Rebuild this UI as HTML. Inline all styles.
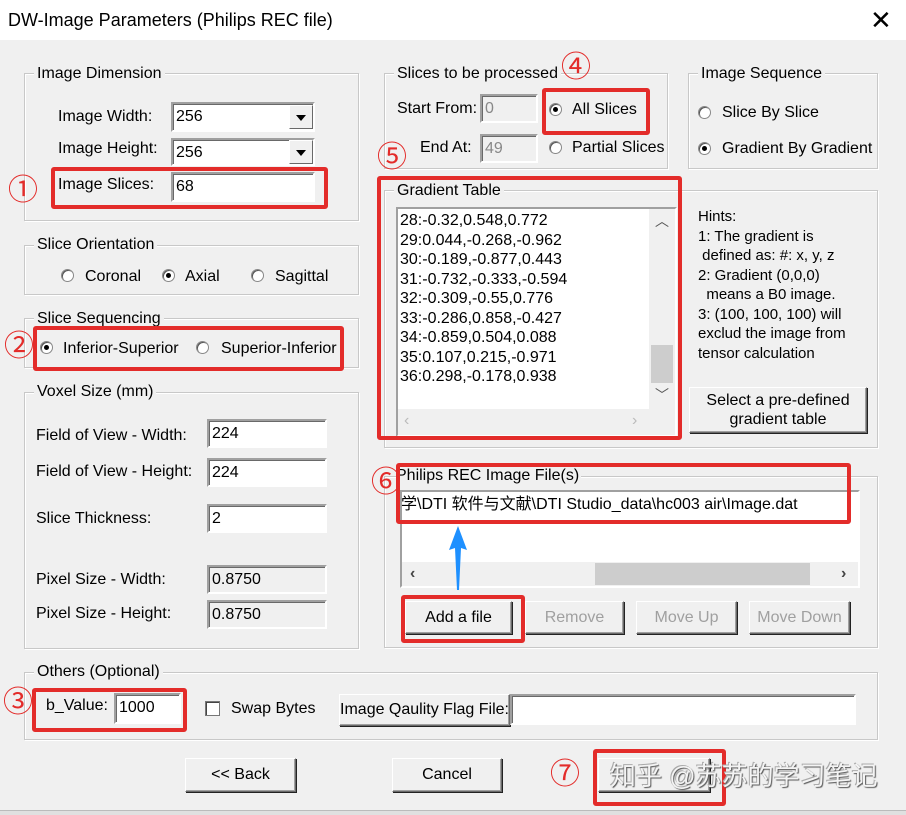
<!DOCTYPE html>
<html><head><meta charset="utf-8">
<style>
*{margin:0;padding:0;box-sizing:border-box}
body{width:906px;height:815px;background:#f0f0f0;font-family:"Liberation Sans","Noto Sans CJK SC",sans-serif;font-size:16px;color:#000;position:relative;overflow:hidden}
.a{position:absolute;white-space:nowrap;line-height:18px}
.g{position:absolute;border:1px solid #c8c8c8;box-shadow:inset 1px 1px 0 #fff,1px 1px 0 #fff}
.gl{position:absolute;background:#f0f0f0;padding:0 3px;line-height:18px;white-space:nowrap}
.in{position:absolute;background:#fff;border:2px solid;border-color:#a0a0a0 #fff #fff #a0a0a0;box-shadow:inset 1px 1px 0 #696969;padding:0 3px;line-height:26px}
.in.d{background:#f0f0f0;color:#888}
.in.d2{background:#f0f0f0}
.btn{position:absolute;border:1px solid;border-color:#fff #696969 #696969 #fff;box-shadow:inset -1px -1px 0 #a0a0a0,1px 1px 0 #222;background:#f0f0f0;text-align:center;line-height:1.2;display:flex;align-items:center;justify-content:center}
.btn.dis{color:#a0a0a0}
.red{position:absolute;border:4px solid #e32c2a;border-radius:3px}
.num{position:absolute;color:#e32c2a;font-size:30px;line-height:30px}
.rad{position:absolute;width:13px;height:13px;border-radius:50%;background:#fff;border:1px solid #888;box-shadow:inset 1px 1px 0 #555}
.rad.on::after{content:"";position:absolute;left:3px;top:3px;width:5px;height:5px;border-radius:50%;background:#000}
.dd{position:absolute;width:24px;height:24px;background:#f0f0f0;border:1px solid;border-color:#fff #696969 #696969 #fff}
.dd::after{content:"";position:absolute;left:6px;top:9px;border:5px solid transparent;border-top:6px solid #000}
</style></head><body>
<div style="position:absolute;left:0;top:0;width:906px;height:40px;background:#fff"></div>
<div class="a" style="left:8px;top:10px;font-size:18px;line-height:20px">DW-Image Parameters (Philips REC file)</div>
<div class="a" style="left:870px;top:6px;font-size:26px;line-height:28px;font-weight:300">✕</div>

<div class="g" style="left:24px;top:73px;width:335px;height:148px"></div>
<div class="gl" style="left:34px;top:65px">Image Dimension</div>
<div class="a" style="left:58px;top:108px">Image Width:</div>
<div class="in" style="left:171px;top:102px;width:144px;height:30px">256</div><div class="dd" style="left:289px;top:105px"></div>
<div class="a" style="left:58px;top:140px">Image Height:</div>
<div class="in" style="left:171px;top:138px;width:144px;height:28px">256</div><div class="dd" style="left:289px;top:140px"></div>
<div class="a" style="left:58px;top:176px">Image Slices:</div>
<div class="in" style="left:171px;top:172px;width:144px;height:30px">68</div>
<div class="red" style="left:51px;top:167px;width:277px;height:42px"></div>
<div class="num" style="left:8px;top:176px">①</div>

<div class="g" style="left:24px;top:245px;width:335px;height:50px"></div>
<div class="gl" style="left:34px;top:236px">Slice Orientation</div>
<div class="rad" style="left:61px;top:269px"></div><div class="a" style="left:85px;top:268px">Coronal</div>
<div class="rad on" style="left:162px;top:269px"></div><div class="a" style="left:185px;top:268px">Axial</div>
<div class="rad" style="left:251px;top:269px"></div><div class="a" style="left:275px;top:268px">Sagittal</div>

<div class="g" style="left:24px;top:318px;width:335px;height:50px"></div>
<div class="gl" style="left:34px;top:310px">Slice Sequencing</div>
<div class="rad on" style="left:40px;top:341px"></div><div class="a" style="left:63px;top:340px">Inferior-Superior</div>
<div class="rad" style="left:196px;top:341px"></div><div class="a" style="left:221px;top:340px">Superior-Inferior</div>
<div class="red" style="left:33px;top:326px;width:311px;height:45px"></div>
<div class="num" style="left:4px;top:332px">②</div>

<div class="g" style="left:24px;top:392px;width:335px;height:257px"></div>
<div class="gl" style="left:34px;top:383px">Voxel Size (mm)</div>
<div class="a" style="left:36px;top:427px">Field of View - Width:</div>
<div class="in" style="left:207px;top:419px;width:120px;height:29px">224</div>
<div class="a" style="left:36px;top:463px">Field of View - Height:</div>
<div class="in" style="left:207px;top:458px;width:120px;height:29px">224</div>
<div class="a" style="left:36px;top:510px">Slice Thickness:</div>
<div class="in" style="left:207px;top:504px;width:120px;height:29px">2</div>
<div class="a" style="left:36px;top:571px">Pixel Size - Width:</div>
<div class="in d2" style="left:207px;top:565px;width:120px;height:29px">0.8750</div>
<div class="a" style="left:36px;top:605px">Pixel Size - Height:</div>
<div class="in d2" style="left:207px;top:600px;width:120px;height:29px">0.8750</div>

<div class="g" style="left:384px;top:73px;width:284px;height:96px"></div>
<div class="gl" style="left:394px;top:65px">Slices to be processed</div>
<div class="num" style="left:561px;top:53px">④</div>
<div class="a" style="left:397px;top:100px">Start From:</div>
<div class="in d" style="left:480px;top:94px;width:58px;height:29px">0</div>
<div class="a" style="left:420px;top:139px">End At:</div>
<div class="in d" style="left:480px;top:134px;width:58px;height:29px">49</div>
<div class="rad on" style="left:549px;top:103px"></div><div class="a" style="left:572px;top:101px">All Slices</div>
<div class="rad" style="left:549px;top:141px"></div><div class="a" style="left:572px;top:139px">Partial Slices</div>
<div class="red" style="left:542px;top:88px;width:108px;height:47px"></div>

<div class="g" style="left:688px;top:73px;width:190px;height:96px"></div>
<div class="gl" style="left:698px;top:65px">Image Sequence</div>
<div class="rad" style="left:698px;top:106px"></div><div class="a" style="left:722px;top:104px">Slice By Slice</div>
<div class="rad on" style="left:698px;top:142px"></div><div class="a" style="left:722px;top:140px">Gradient By Gradient</div>

<div class="num" style="left:377px;top:143px">⑤</div>
<div class="g" style="left:384px;top:190px;width:494px;height:258px"></div>
<div class="gl" style="left:394px;top:182px">Gradient Table</div>
<div style="position:absolute;left:396px;top:207px;width:281px;height:230px;background:#fff;border:2px solid;border-color:#a0a0a0 #fff #fff #a0a0a0"></div>
<div style="position:absolute;left:649px;top:209px;width:26px;height:200px;background:#f0f0f0"></div>
<div style="position:absolute;left:651px;top:345px;width:22px;height:38px;background:#cdcdcd"></div>
<div class="a" style="left:655px;top:212px;color:#555;font-size:14px">︿</div>
<div class="a" style="left:655px;top:386px;color:#555;font-size:14px">﹀</div>
<div style="position:absolute;left:398px;top:409px;width:277px;height:26px;background:#f0f0f0"></div>
<div class="a" style="left:404px;top:412px;color:#bbb">‹</div>
<div class="a" style="left:632px;top:412px;color:#bbb">›</div>
<div class="a" style="left:400px;top:211px;line-height:19.5px">28:-0.32,0.548,0.772<br>29:0.044,-0.268,-0.962<br>30:-0.189,-0.877,0.443<br>31:-0.732,-0.333,-0.594<br>32:-0.309,-0.55,0.776<br>33:-0.286,0.858,-0.427<br>34:-0.859,0.504,0.088<br>35:0.107,0.215,-0.971<br>36:0.298,-0.178,0.938</div>
<div class="red" style="left:377px;top:176px;width:305px;height:264px"></div>
<div class="a" style="left:698px;top:207px;line-height:19.5px;font-size:15px">Hints:<br>1: The gradient is<br>&nbsp;defined as: #: x, y, z<br>2: Gradient (0,0,0)<br>&nbsp;&nbsp;means a B0 image.<br>3: (100, 100, 100) will<br>exclud the image from<br>tensor calculation</div>
<div class="btn" style="left:689px;top:387px;width:178px;height:46px">Select a pre-defined<br>gradient table</div>

<div class="g" style="left:384px;top:476px;width:494px;height:172px"></div>
<div class="gl" style="left:396px;top:467px;padding:0 2px 0 0">Philips REC Image File(s)</div>
<div style="position:absolute;left:400px;top:490px;width:460px;height:98px;background:#fff;border:2px solid;border-color:#a0a0a0 #fff #fff #a0a0a0"></div>
<div style="position:absolute;left:402px;top:562px;width:456px;height:24px;background:#f0f0f0"></div>
<div style="position:absolute;left:595px;top:563px;width:215px;height:22px;background:#cdcdcd"></div>
<div class="a" style="left:410px;top:565px;color:#444;font-weight:bold">‹</div>
<div class="a" style="left:841px;top:565px;color:#444;font-weight:bold">›</div>
<div class="a" style="left:401px;top:496px">学\DTI 软件与文献\DTI Studio_data\hc003 air\Image.dat</div>
<div class="red" style="left:396px;top:463px;width:455px;height:61px"></div>
<div class="num" style="left:371px;top:468px">⑥</div>
<svg style="position:absolute;left:447px;top:524px" width="22" height="68"><path d="M11 2 L2 26 L8 24 L10 66 L12 66 L14 24 L20 26 Z" fill="#1e90ff"/></svg>
<div class="btn" style="left:405px;top:601px;width:107px;height:33px">Add a file</div>
<div class="red" style="left:401px;top:595px;width:124px;height:48px"></div>
<div class="btn dis" style="left:525px;top:601px;width:99px;height:33px">Remove</div>
<div class="btn dis" style="left:636px;top:601px;width:101px;height:33px">Move Up</div>
<div class="btn dis" style="left:749px;top:601px;width:101px;height:33px">Move Down</div>

<div class="g" style="left:24px;top:672px;width:854px;height:68px"></div>
<div class="gl" style="left:34px;top:663px">Others (Optional)</div>
<div class="a" style="left:46px;top:697px">b_Value:</div>
<div class="in" style="left:114px;top:693px;width:67px;height:31px">1000</div>
<div class="red" style="left:32px;top:688px;width:155px;height:44px"></div>
<div class="num" style="left:3px;top:688px">③</div>
<div style="position:absolute;left:205px;top:701px;width:15px;height:15px;background:#fff;border:1px solid #777;box-shadow:inset 1px 1px 0 #444"></div>
<div class="a" style="left:231px;top:700px">Swap Bytes</div>
<div class="btn" style="left:339px;top:694px;width:171px;height:32px">Image Qaulity Flag File:</div>
<div class="in" style="left:510px;top:694px;width:346px;height:31px"></div>

<div class="btn" style="left:185px;top:758px;width:111px;height:34px">&lt;&lt; Back</div>
<div class="btn" style="left:392px;top:758px;width:110px;height:34px">Cancel</div>
<div class="btn" style="left:598px;top:758px;width:112px;height:34px"></div>
<div class="red" style="left:593px;top:749px;width:133px;height:57px"></div>
<div class="num" style="left:550px;top:760px">⑦</div>
<div class="a" style="left:610px;top:761px;font-size:26px;line-height:30px;color:#f4f4f4;text-shadow:1px 1px 1px #555,-1px -1px 0 #aaa">知乎 @苏苏的学习笔记</div>
<div style="position:absolute;left:0;top:810px;width:906px;height:5px;background:#e0e0e0;border-top:1px solid #bbb"></div>
</body></html>
